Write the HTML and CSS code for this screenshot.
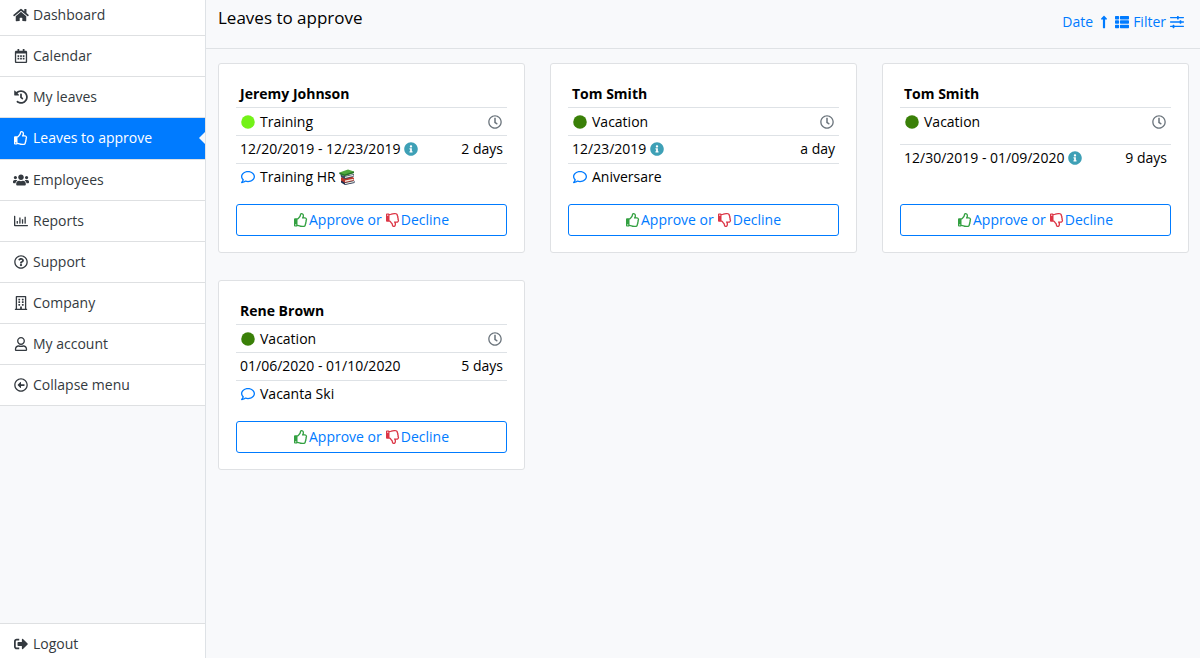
FILE: index.html
```html
<!DOCTYPE html>
<html lang="en">
<head>
<meta charset="utf-8">
<meta name="viewport" content="width=device-width, initial-scale=1">
<title>Leaves to approve</title>
<link rel="stylesheet" href="styles.css">
</head>
<body>
<svg class="sprite" aria-hidden="true">
  <symbol id="home" viewBox="0 0 576 512"><path d="M280.37 148.26L96 300.11V464a16 16 0 0 0 16 16l112.06-.29a16 16 0 0 0 15.92-16V368a16 16 0 0 1 16-16h64a16 16 0 0 1 16 16v95.64a16 16 0 0 0 16 16.05L464 480a16 16 0 0 0 16-16V300L295.67 148.26a12.19 12.19 0 0 0-15.3 0zM571.6 251.47L488 182.56V44.05a12 12 0 0 0-12-12h-56a12 12 0 0 0-12 12v72.61L318.47 43a48 48 0 0 0-61 0L4.34 251.47a12 12 0 0 0-1.6 16.9l25.5 31A12 12 0 0 0 45.15 301l235.22-193.74a12.19 12.19 0 0 1 15.3 0L530.9 301a12 12 0 0 0 16.9-1.6l25.5-31a12 12 0 0 0-1.7-16.93z"/></symbol>
  <symbol id="calendar" viewBox="0 0 448 512"><path d="M148 288h-40c-6.600 0-12-5.400-12-12v-40c0-6.600 5.400-12 12-12h40c6.600 0 12 5.400 12 12v40c0 6.600-5.400 12-12 12zm108-12v-40c0-6.600-5.400-12-12-12h-40c-6.600 0-12 5.400-12 12v40c0 6.600 5.400 12 12 12h40c6.600 0 12-5.400 12-12zm96 0v-40c0-6.600-5.400-12-12-12h-40c-6.600 0-12 5.400-12 12v40c0 6.600 5.400 12 12 12h40c6.600 0 12-5.400 12-12zm-96 96v-40c0-6.600-5.400-12-12-12h-40c-6.600 0-12 5.400-12 12v40c0 6.600 5.400 12 12 12h40c6.600 0 12-5.400 12-12zm-96 0v-40c0-6.600-5.400-12-12-12h-40c-6.600 0-12 5.400-12 12v40c0 6.600 5.400 12 12 12h40c6.600 0 12-5.400 12-12zm192 0v-40c0-6.600-5.400-12-12-12h-40c-6.600 0-12 5.400-12 12v40c0 6.600 5.400 12 12 12h40c6.600 0 12-5.400 12-12zm96-260v352c0 26.500-21.500 48-48 48H48c-26.500 0-48-21.500-48-48V112c0-26.500 21.500-48 48-48h48V12c0-6.600 5.400-12 12-12h40c6.600 0 12 5.400 12 12v52h128V12c0-6.600 5.400-12 12-12h40c6.600 0 12 5.400 12 12v52h48c26.500 0 48 21.500 48 48zm-48 346V160H48v298c0 3.300 2.700 6 6 6h340c3.300 0 6-2.700 6-6z"/></symbol>
  <symbol id="history" viewBox="0 0 512 512"><path d="M504 255.531c.253 136.64-111.18 248.372-247.82 248.468-59.015.042-113.223-20.53-155.822-54.911-11.077-8.94-11.905-25.541-1.839-35.607l11.267-11.267c8.609-8.609 22.353-9.551 31.891-1.984C173.062 425.135 212.781 440 256 440c101.705 0 184-82.311 184-184 0-101.705-82.311-184-184-184-48.814 0-93.149 18.969-126.068 49.932l50.754 50.754c10.08 10.08 2.941 27.314-11.313 27.314H24c-8.837 0-16-7.163-16-16V38.627c0-14.254 17.234-21.393 27.314-11.314l49.372 49.372C129.209 34.136 189.552 8 256 8c136.81 0 247.747 110.78 248 247.531zm-180.912 78.784l9.823-12.63c8.138-10.463 6.253-25.542-4.21-33.679L288 256.349V152c0-13.255-10.745-24-24-24h-16c-13.255 0-24 10.745-24 24v135.651l65.409 50.874c10.463 8.137 25.541 6.253 33.679-4.210z"/></symbol>
  <symbol id="thumb" viewBox="0 0 512 512"><path d="M466.27 286.69C475.04 271.84 480 256 480 236.85c0-44.015-37.218-85.58-85.82-85.58H357.7c4.92-12.81 8.85-28.13 8.85-46.54C366.55 31.936 328.86 0 271.28 0c-61.607 0-58.093 94.933-71.76 108.6-22.747 22.747-49.615 66.447-68.76 83.4H32c-17.673 0-32 14.327-32 32v240c0 17.673 14.327 32 32 32h64c14.893 0 27.408-10.174 30.978-23.95 44.509 1.001 75.06 39.94 177.802 39.94 7.22 0 15.22.01 22.22.01 77.117 0 111.986-39.423 112.94-95.33 13.319-18.425 20.299-43.122 17.34-66.99 9.854-18.452 13.664-40.343 8.99-62.99zm-61.75 53.83c12.56 21.13 1.26 49.41-13.94 57.57 7.7 48.78-17.608 65.9-53.12 65.9h-37.82c-71.639 0-118.029-37.82-171.64-37.82V240h10.92c28.36 0 67.98-70.89 94.54-97.46 28.36-28.36 18.91-75.63 37.82-94.54 47.27 0 47.27 32.98 47.27 56.73 0 39.17-28.36 56.72-28.36 94.54h103.99c21.11 0 37.73 18.91 37.82 37.82.09 18.9-12.82 37.81-22.27 37.81 13.489 14.555 16.371 45.236-5.21 65.62zM88 432c0 13.255-10.745 24-24 24s-24-10.745-24-24 10.745-24 24-24 24 10.745 24 24z"/></symbol>
  <symbol id="thumb-down" viewBox="0 0 512 512"><g transform="matrix(1 0 0 -1 0 512)"><use href="#thumb" width="512" height="512"/></g></symbol>
  <symbol id="users" viewBox="0 0 640 512"><path d="M96 224c35.3 0 64-28.7 64-64s-28.7-64-64-64-64 28.7-64 64 28.7 64 64 64zm448 0c35.3 0 64-28.7 64-64s-28.7-64-64-64-64 28.7-64 64 28.7 64 64 64zm32 32h-64c-17.6 0-33.5 7.1-45.1 18.6 40.3 22.1 68.9 62 75.1 109.4h66c17.7 0 32-14.3 32-32v-32c0-35.3-28.7-64-64-64zm-256 0c61.9 0 112-50.1 112-112S381.9 32 320 32 208 82.1 208 144s50.1 112 112 112zm76.8 32h-8.3c-20.8 10-43.9 16-68.5 16s-47.6-6-68.5-16h-8.3C179.6 288 128 339.6 128 403.2V432c0 26.5 21.5 48 48 48h288c26.5 0 48-21.5 48-48v-28.8c0-63.6-51.6-115.2-115.2-115.2zm-223.7-13.4C161.5 263.1 145.6 256 128 256H64c-35.3 0-64 28.7-64 64v32c0 17.7 14.3 32 32 32h65.9c6.3-47.4 34.9-87.3 75.2-109.4z"/></symbol>
  <symbol id="chart" viewBox="0 0 512 512"><path d="M396.8 352h22.4c6.4 0 12.8-6.4 12.8-12.8V108.8c0-6.4-6.4-12.8-12.8-12.8h-22.4c-6.4 0-12.8 6.4-12.8 12.8v230.4c0 6.4 6.4 12.8 12.8 12.8zm-192 0h22.4c6.4 0 12.8-6.4 12.8-12.8V140.800c0-6.400-6.400-12.800-12.800-12.800h-22.400c-6.400 0-12.800 6.400-12.800 12.800v198.400c0 6.400 6.400 12.800 12.800 12.800zm96 0h22.400c6.400 0 12.800-6.400 12.800-12.800V204.800c0-6.400-6.400-12.800-12.800-12.800h-22.400c-6.400 0-12.800 6.400-12.800 12.800v134.400c0 6.400 6.400 12.800 12.800 12.800zM496 400H48V80c0-8.840-7.160-16-16-16H16C7.160 64 0 71.160 0 80v336c0 17.670 14.330 32 32 32h464c8.840 0 16-7.160 16-16v-16c0-8.840-7.160-16-16-16zm-387.200-48h22.400c6.400 0 12.800-6.400 12.800-12.800v-70.400c0-6.400-6.400-12.800-12.800-12.800h-22.400c-6.400 0-12.800 6.400-12.800 12.800v70.400c0 6.400 6.400 12.800 12.800 12.800z"/></symbol>
  <symbol id="question" viewBox="0 0 512 512"><path d="M256 8C119.043 8 8 119.083 8 256c0 136.997 111.043 248 248 248s248-111.003 248-248C504 119.083 392.957 8 256 8zm0 448c-110.532 0-200-89.431-200-200 0-110.495 89.472-200 200-200 110.491 0 200 89.471 200 200 0 110.53-89.431 200-200 200zm107.244-255.2c0 67.052-72.421 68.084-72.421 92.863V300c0 6.627-5.373 12-12 12h-45.647c-6.627 0-12-5.373-12-12v-8.659c0-35.745 27.1-50.034 47.579-61.516 17.561-9.845 28.324-16.541 28.324-29.579 0-17.246-21.999-28.693-39.784-28.693-23.189 0-33.894 10.977-48.942 29.969-4.057 5.12-11.46 6.071-16.666 2.124l-27.824-21.098c-5.107-3.872-6.251-11.066-2.644-16.363C184.846 131.491 214.94 112 261.794 112c49.071 0 101.45 38.304 101.45 88.8zM298 368c0 23.159-18.841 42-42 42s-42-18.841-42-42 18.841-42 42-42 42 18.841 42 42z"/></symbol>
  <symbol id="building" viewBox="0 0 448 512"><path d="M128 148v-40c0-6.6 5.4-12 12-12h40c6.6 0 12 5.4 12 12v40c0 6.6-5.4 12-12 12h-40c-6.6 0-12-5.4-12-12zm140 12h40c6.6 0 12-5.4 12-12v-40c0-6.6-5.4-12-12-12h-40c-6.6 0-12 5.4-12 12v40c0 6.6 5.4 12 12 12zm-128 96h40c6.6 0 12-5.4 12-12v-40c0-6.6-5.4-12-12-12h-40c-6.6 0-12 5.4-12 12v40c0 6.6 5.4 12 12 12zm128 0h40c6.6 0 12-5.4 12-12v-40c0-6.6-5.4-12-12-12h-40c-6.6 0-12 5.4-12 12v40c0 6.6 5.4 12 12 12zm-76 84v-40c0-6.6-5.4-12-12-12h-40c-6.6 0-12 5.4-12 12v40c0 6.6 5.4 12 12 12h40c6.6 0 12-5.4 12-12zm76 12h40c6.6 0 12-5.4 12-12v-40c0-6.6-5.4-12-12-12h-40c-6.6 0-12 5.4-12 12v40c0 6.6 5.4 12 12 12zm180 124v36H0v-36c0-6.6 5.4-12 12-12h19.5V24c0-13.3 10.7-24 24-24h337c13.3 0 24 10.7 24 24v440H436c6.6 0 12 5.4 12 12zM79.500 463H192v-67c0-6.600 5.400-12 12-12h40c6.600 0 12 5.400 12 12v67h112.500V49L80 48l-.500 415z"/></symbol>
  <symbol id="user" viewBox="0 0 448 512"><path d="M313.6 304c-28.7 0-42.5 16-89.6 16-47.1 0-60.8-16-89.6-16C60.2 304 0 364.2 0 438.4V464c0 26.5 21.5 48 48 48h352c26.500 0 48-21.500 48-48v-25.600c0-74.200-60.200-134.400-134.400-134.400zM400 464H48v-25.600c0-47.600 38.800-86.400 86.400-86.400 14.600 0 38.300 16 89.600 16 51.700 0 74.900-16 89.600-16 47.600 0 86.400 38.800 86.400 86.400V464zM224 288c79.500 0 144-64.500 144-144S303.500 0 224 0 80 64.500 80 144s64.500 144 144 144zm0-240c52.900 0 96 43.100 96 96s-43.100 96-96 96-96-43.100-96-96 43.100-96 96-96z"/></symbol>
  <symbol id="collapse" viewBox="0 0 512 512"><path d="M8 256c0 137 111 248 248 248s248-111 248-248S393 8 256 8 8 119 8 256zm448 0c0 110.5-89.5 200-200 200S56 366.5 56 256 145.5 56 256 56s200 89.5 200 200zm-72-20v40c0 6.6-5.4 12-12 12H256v67c0 10.7-12.9 16-20.5 8.5l-99-99c-4.7-4.7-4.7-12.3 0-17l99-99c7.6-7.6 20.5-2.2 20.5 8.5v67h116c6.6 0 12 5.4 12 12z"/></symbol>
  <symbol id="logout" viewBox="0 0 512 512"><path d="M497 273L329 441c-15 15-41 4.5-41-17v-96H152c-13.3 0-24-10.7-24-24v-96c0-13.3 10.7-24 24-24h136V88c0-21.4 25.9-32 41-17l168 168c9.3 9.4 9.3 24.6 0 34zM192 436v-40c0-6.6-5.4-12-12-12H96c-17.7 0-32-14.3-32-32V160c0-17.7 14.3-32 32-32h84c6.6 0 12-5.4 12-12V76c0-6.6-5.4-12-12-12H96c-53 0-96 43-96 96v192c0 53 43 96 96 96h84c6.6 0 12-5.4 12-12z"/></symbol>
  <symbol id="arrow-up" viewBox="0 0 256 512"><path d="M88 166.059V468c0 6.627 5.373 12 12 12h56c6.627 0 12-5.373 12-12V166.059h46.059c21.382 0 32.09-25.851 16.971-40.971l-86.059-86.059c-9.373-9.373-24.569-9.373-33.941 0l-86.059 86.059c-15.119 15.119-4.411 40.971 16.971 40.971H88z"/></symbol>
  <symbol id="list" viewBox="0 0 512 512"><path d="M24 32h101c13 0 24 11 24 24v80c0 13-11 24-24 24H24c-13 0-24-11-24-24V56c0-13 11-24 24-24zM205 32h283c13 0 24 11 24 24v80c0 13-11 24-24 24H205c-13 0-24-11-24-24V56c0-13 11-24 24-24zM24 192h101c13 0 24 11 24 24v80c0 13-11 24-24 24H24c-13 0-24-11-24-24v-80c0-13 11-24 24-24zM205 192h283c13 0 24 11 24 24v80c0 13-11 24-24 24H205c-13 0-24-11-24-24v-80c0-13 11-24 24-24zM24 352h101c13 0 24 11 24 24v80c0 13-11 24-24 24H24c-13 0-24-11-24-24v-80c0-13 11-24 24-24zM205 352h283c13 0 24 11 24 24v80c0 13-11 24-24 24H205c-13 0-24-11-24-24v-80c0-13 11-24 24-24z"/></symbol>
  <symbol id="sliders" viewBox="0 0 512 512"><path d="M16 72h240V48c0-9 7-16 16-16h32c9 0 16 7 16 16v24h176c9 0 16 7 16 16v16c0 9-7 16-16 16H320v24c0 9-7 16-16 16h-32c-9 0-16-7-16-16v-24H16c-9 0-16-7-16-16V88c0-9 7-16 16-16zM16 232h336v-24c0-9 7-16 16-16h32c9 0 16 7 16 16v24h80c9 0 16 7 16 16v16c0 9-7 16-16 16h-80v24c0 9-7 16-16 16h-32c-9 0-16-7-16-16v-24H16c-9 0-16-7-16-16v-16c0-9 7-16 16-16zM16 392h80v-24c0-9 7-16 16-16h32c9 0 16 7 16 16v24h336c9 0 16 7 16 16v16c0 9-7 16-16 16H160v24c0 9-7 16-16 16h-32c-9 0-16-7-16-16v-24H16c-9 0-16-7-16-16v-16c0-9 7-16 16-16z"/></symbol>
  <symbol id="clock" viewBox="0 0 512 512"><path d="M256 8C119 8 8 119 8 256s111 248 248 248 248-111 248-248S393 8 256 8zm0 448c-110.500 0-200-89.500-200-200S145.500 56 256 56s200 89.500 200 200-89.500 200-200 200zm61.800-104.400l-84.900-61.700c-3.100-2.300-4.900-5.900-4.900-9.700V116c0-6.600 5.400-12 12-12h32c6.600 0 12 5.400 12 12v141.700l66.800 48.600c5.400 3.900 6.500 11.400 2.600 16.800L334.600 349c-3.900 5.300-11.400 6.500-16.800 2.600z"/></symbol>
  <symbol id="info" viewBox="0 0 512 512"><path d="M256 8C119.043 8 8 119.083 8 256c0 136.997 111.043 248 248 248s248-111.003 248-248C504 119.083 392.957 8 256 8zm0 110c23.196 0 42 18.804 42 42s-18.804 42-42 42-42-18.804-42-42 18.804-42 42-42zm56 254c0 6.627-5.373 12-12 12h-88c-6.627 0-12-5.373-12-12v-24c0-6.627 5.373-12 12-12h12v-64h-12c-6.627 0-12-5.373-12-12v-24c0-6.627 5.373-12 12-12h64c6.627 0 12 5.373 12 12v100h12c6.627 0 12 5.373 12 12v24z"/></symbol>
  <symbol id="comment" viewBox="0 0 512 512"><path d="M256 32C114.6 32 0 125.1 0 240c0 47.6 19.9 91.2 52.9 126.3C38 405.7 7 439.1 6.5 439.5c-6.6 7-8.4 17.2-4.6 26S14.4 480 24 480c61.5 0 110-25.7 139.1-46.3C192 442.8 223.2 448 256 448c141.4 0 256-93.1 256-208S397.4 32 256 32zm0 368c-26.7 0-53.1-4.1-78.4-12.1l-22.7-7.2-19.5 13.8c-14.3 10.1-33.9 21.4-57.5 29 7.3-12.1 14.4-25.7 19.9-40.2l10.6-28.1-20.6-21.8C69.7 314.1 48 282.2 48 240c0-88.2 93.3-160 208-160s208 71.8 208 160-93.3 160-208 160z"/></symbol>
  <symbol id="dot" viewBox="0 0 512 512"><circle cx="256" cy="256" r="248"/></symbol>
  <symbol id="books" viewBox="0 0 16 16">
    <path fill="#20304f" d="M2 11.500l9-2 4.500 2.500v2L6 16l-4-2.500z"/><path fill="#e8e6dc" d="M6 14l9-2v1.200l-9 2z"/>
    <path fill="#b8352b" d="M2 8.500l9-2 4 2.500v2.500L6 13.800 2 11.500z"/><path fill="#f3ece0" d="M6 11.500L14.500 9.700v1.400L6 13z"/>
    <path fill="#3a4a62" d="M1.500 5.500l4 1.500 9.500-2v2.500L6 10 2 8z"/><path fill="#efeee4" d="M6 7.800L14.500 5.800v1.200L6 9z"/>
    <path fill="#4fa83c" d="M.5 3.500L9 .5l6 2v1.500L5.500 7 .5 5z"/><path fill="#26702a" d="M.5 3.500l5 2L15 2.500V4L5.500 7 .5 5z"/>
  </symbol>
</svg>

<div class="app">
  <nav class="sidebar" aria-label="Main menu">
    <a class="nav-item" href="#"><svg class="icon icon-wide"><use href="#home"/></svg>Dashboard</a>
    <a class="nav-item" href="#"><svg class="icon"><use href="#calendar"/></svg>Calendar</a>
    <a class="nav-item" href="#"><svg class="icon"><use href="#history"/></svg>My leaves</a>
    <a class="nav-item active" href="#" aria-current="page"><svg class="icon"><use href="#thumb"/></svg>Leaves to approve</a>
    <a class="nav-item" href="#"><svg class="icon icon-wide"><use href="#users"/></svg>Employees</a>
    <a class="nav-item" href="#"><svg class="icon"><use href="#chart"/></svg>Reports</a>
    <a class="nav-item" href="#"><svg class="icon"><use href="#question"/></svg>Support</a>
    <a class="nav-item" href="#"><svg class="icon"><use href="#building"/></svg>Company</a>
    <a class="nav-item" href="#"><svg class="icon"><use href="#user"/></svg>My account</a>
    <a class="nav-item" href="#"><svg class="icon"><use href="#collapse"/></svg>Collapse menu</a>
    <a class="nav-item logout" href="#"><svg class="icon"><use href="#logout"/></svg>Logout</a>
  </nav>

  <main class="content">
    <header class="topbar">
      <h1 class="title">Leaves to approve</h1>
      <div class="tools">
        <a class="tool" href="#">Date <svg class="icon"><use href="#arrow-up"/></svg></a>
        <a class="tool" href="#" aria-label="List view"><svg class="icon"><use href="#list"/></svg></a>
        <a class="tool" href="#">Filter <svg class="icon"><use href="#sliders"/></svg></a>
      </div>
    </header>

    <section class="cards">
      <article class="card">
        <h2 class="name">Jeremy Johnson</h2>
        <div class="row"><svg class="icon training"><use href="#dot"/></svg>Training<svg class="icon clock"><use href="#clock"/></svg></div>
        <div class="row">12/20/2019 - 12/23/2019<svg class="icon info"><use href="#info"/></svg><span class="days">2 days</span></div>
        <div class="row"><svg class="icon comment"><use href="#comment"/></svg>Training HR<svg class="icon books" role="img" aria-label="Books"><use href="#books"/></svg></div>
        <button class="decide" type="button"><svg class="icon approve"><use href="#thumb"/></svg>Approve or <svg class="icon decline"><use href="#thumb-down"/></svg>Decline</button>
      </article>
      <article class="card">
        <h2 class="name">Tom Smith</h2>
        <div class="row"><svg class="icon vacation"><use href="#dot"/></svg>Vacation<svg class="icon clock"><use href="#clock"/></svg></div>
        <div class="row">12/23/2019<svg class="icon info"><use href="#info"/></svg><span class="days">a day</span></div>
        <div class="row"><svg class="icon comment"><use href="#comment"/></svg>Aniversare</div>
        <button class="decide" type="button"><svg class="icon approve"><use href="#thumb"/></svg>Approve or <svg class="icon decline"><use href="#thumb-down"/></svg>Decline</button>
      </article>
      <article class="card">
        <h2 class="name">Tom Smith</h2>
        <div class="row row-tall"><svg class="icon vacation"><use href="#dot"/></svg>Vacation<svg class="icon clock"><use href="#clock"/></svg></div>
        <div class="row">12/30/2019 - 01/09/2020<svg class="icon info"><use href="#info"/></svg><span class="days">9 days</span></div>
        <button class="decide" type="button"><svg class="icon approve"><use href="#thumb"/></svg>Approve or <svg class="icon decline"><use href="#thumb-down"/></svg>Decline</button>
      </article>
      <article class="card">
        <h2 class="name">Rene Brown</h2>
        <div class="row"><svg class="icon vacation"><use href="#dot"/></svg>Vacation<svg class="icon clock"><use href="#clock"/></svg></div>
        <div class="row">01/06/2020 - 01/10/2020<span class="days">5 days</span></div>
        <div class="row"><svg class="icon comment"><use href="#comment"/></svg>Vacanta Ski</div>
        <button class="decide" type="button"><svg class="icon approve"><use href="#thumb"/></svg>Approve or <svg class="icon decline"><use href="#thumb-down"/></svg>Decline</button>
      </article>
    </section>
  </main>
</div>
</body>
</html>
```
FILE: styles.css
```css
* { box-sizing: border-box; }

body {
  margin: 0;
  background: #f8f9fb;
  color: #000;
  font: 14px/20px "Open Sans", "Noto Sans", sans-serif;
}

a { text-decoration: none; }

.sprite { display: none; }

.icon {
  flex: none;
  width: 14px;
  height: 14px;
  fill: currentColor;
}

.app {
  display: flex;
  min-height: 100vh;
}

.sidebar {
  display: flex;
  flex: none;
  flex-direction: column;
  width: 206px;
  border-right: 1px solid #dee2e6;
}

.nav-item {
  position: relative;
  display: flex;
  align-items: center;
  gap: 5px;
  padding: 10px 14px;
  border-bottom: 1px solid #dee0e2;
  background: #fff;
  color: #343a40;
}

.nav-item:first-child { padding-top: 5px; }

.nav-item .icon-wide {
  width: 16px;
  margin: 0 -1px;
}

.nav-item.active {
  padding-bottom: 11px;
  background: #007bff;
  color: #fff;
}

.nav-item.active::after {
  position: absolute;
  top: 14px;
  right: 0;
  border: 6px solid transparent;
  border-right-color: #f8f9fb;
  border-left: 0;
  content: "";
}

.nav-item.logout {
  margin-top: auto;
  padding-bottom: 4px;
  border-top: 1px solid #dee0e2;
  border-bottom: 0;
}

.content {
  flex: 1;
  min-width: 0;
}

.topbar {
  display: flex;
  justify-content: space-between;
  padding: 6px 16px 14px 12px;
  border-bottom: 1px solid #dfe2e5;
}

.title {
  margin: 0;
  font-size: 17px;
  font-weight: 400;
  line-height: 24px;
}

.tools {
  display: flex;
  gap: 4px;
  padding-top: 4px;
}

.tool {
  display: flex;
  align-items: center;
  height: 24px;
  gap: 4px;
  color: #007bff;
}

.cards {
  display: grid;
  grid-template-columns: repeat(3, 1fr);
  gap: 27px 25px;
  padding: 14px 11px 27px 12px;
}

.card {
  display: flex;
  flex-direction: column;
  padding: 17px 17px 16px;
  border: 1px solid #dfe1e4;
  border-radius: 3px;
  background: #fff;
}

.name {
  margin: 0;
  padding: 3px 4px;
  font-size: 14px;
  font-weight: 700;
  line-height: 20px;
}

.row {
  display: flex;
  align-items: center;
  gap: 3px;
  padding: 4px 4px 3px;
  border-top: 1px solid #dee2e6;
}

.row + .row {
  padding-top: 3px;
  padding-bottom: 4px;
}

.row-tall { padding-bottom: 12px; }

.row .icon:first-child { margin: 0 2px 0 1px; }

.training { color: #73f218; }
.vacation { color: #3a8008; }
.info { color: #3ea0b6; }
.comment { color: #007bff; }
.approve { color: #33a041; }
.decline { color: #dc3545; }

.row .books {
  width: 16px;
  height: 16px;
}

.clock {
  margin-right: 1px;
  margin-left: auto;
  color: #6c757d;
}

.days { margin-left: auto; }

.decide {
  display: flex;
  align-items: center;
  justify-content: center;
  height: 32px;
  margin-top: auto;
  padding: 0;
  border: 1px solid #007bff;
  border-radius: 3px;
  background: #fff;
  color: #007bff;
  font: inherit;
  gap: 1px;
}

.decide .decline { margin-left: 3px; }

.row:nth-last-child(2) { margin-bottom: 13px; }
```
